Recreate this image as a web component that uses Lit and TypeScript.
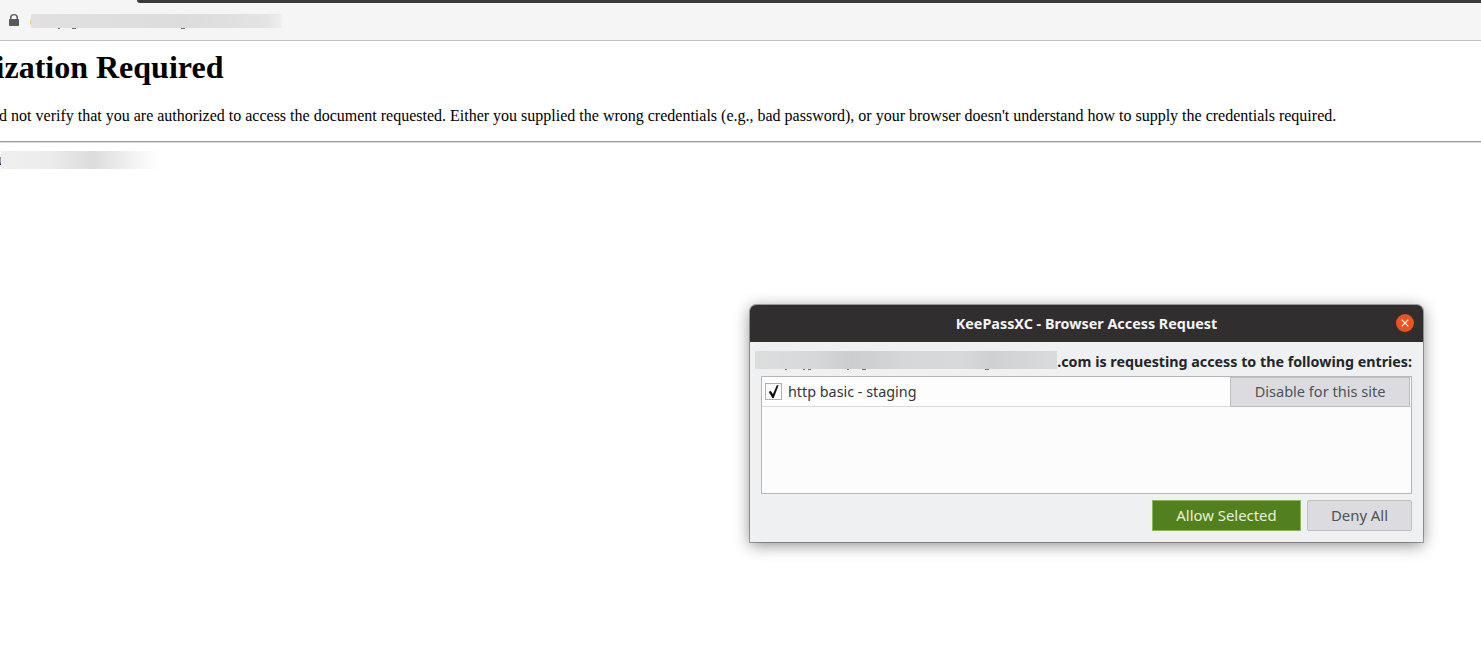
import { LitElement, html, css } from "lit";
import { customElement } from "lit/decorators.js";

@customElement("app-root")
export class AppRoot extends LitElement {
  static styles = css`
    :host {
      display: block;
      position: relative;
      width: 1481px;
      height: 653px;
      overflow: hidden;
      background: #fff;
      font-family: "Liberation Serif", serif;
      color: #000;
    }
    .toolbar {
      position: relative;
      box-sizing: border-box;
      height: 41px;
      background: #f5f5f5;
      border-bottom: 1px solid #c0c0c0;
      display: flex;
      align-items: center;
      padding-left: 9px;
    }
    .strip {
      position: absolute;
      left: 137px;
      right: 0;
      top: 0;
      height: 3px;
      background: #3c3b37;
      border-bottom-left-radius: 4px;
    }
    .lock { display: block; width: 10px; height: 12px; }
    .dot {
      position: absolute;
      left: 30px;
      top: 19px;
      width: 4px;
      height: 6px;
      border-radius: 3px;
      background: #f6c46a;
    }
    .url-blur {
      position: absolute;
      left: 31px;
      top: 14px;
      width: 251px;
      height: 14px;
      background: linear-gradient(90deg, #e2e0e0 0%, #dfdfdf 30%, #dcdcdc 60%, #e0e0e0 80%, #e4e4e4 94%, #efefef 100%);
    }
    .tail {
      position: absolute;
      top: 28px;
      height: 1px;
      background: #33415c;
      opacity: 0.75;
    }
    .doc { overflow: hidden; }
    h1 {
      margin: 8px 0 21.44px -104px;
      font-size: 32px;
      line-height: 37px;
      font-weight: 700;
      white-space: nowrap;
    }
    p {
      margin: 0 0 16px -104px;
      font-size: 16px;
      line-height: 18px;
      white-space: nowrap;
    }
    hr {
      margin: 0;
      height: 0;
      border: 0;
      border-top: 1px solid #a0a0a0;
      border-bottom: 1px solid #d8d8d8;
    }
    .addr-blur {
      position: absolute;
      left: 1px;
      top: 151px;
      width: 162px;
      height: 18px;
      background: linear-gradient(90deg, #efefef 0%, #ececec 30%, #dcdcdc 56%, #e8e8e8 70%, #f1f1f1 80%, #fbfbfb 92%, #fff 100%);
    }
    .addr-sliver {
      position: absolute;
      left: 0;
      top: 157px;
      width: 1px;
      height: 8px;
      background: linear-gradient(180deg, #c4744a 0%, #8fb4d8 55%, #222 100%);
    }
    .window {
      position: absolute;
      left: 750px;
      top: 305px;
      width: 673px;
      height: 237px;
      box-sizing: border-box;
      display: flex;
      flex-direction: column;
      background: #eff0f1;
      border-radius: 6px 6px 0 0;
      outline: 1px solid rgba(0, 0, 0, 0.3);
      box-shadow: 0 3px 16px rgba(0, 0, 0, 0.46);
      font-family: "Noto Sans", sans-serif;
      font-size: 14px;
      color: #31363b;
    }
    .titlebar {
      position: relative;
      flex: none;
      height: 37px;
      background: #302e2f;
      border-radius: 6px 6px 0 0;
      display: flex;
      align-items: center;
      justify-content: center;
      color: #f4f4f4;
      font-weight: 700;
      font-size: 14.35px;
    }
    .close {
      position: absolute;
      right: 9px;
      top: 9px;
      width: 18px;
      height: 18px;
      display: block;
    }
    .body {
      flex: 1;
      display: flex;
      flex-direction: column;
      padding: 11px 11px 12px 11px;
    }
    .request {
      position: relative;
      height: 18px;
      line-height: 18px;
      text-align: right;
      font-weight: 700;
      font-size: 14.27px;
      color: #232629;
      margin-bottom: 5px;
      white-space: nowrap;
    }
    .host-blur {
      position: absolute;
      left: -6px;
      top: -2px;
      width: 302px;
      height: 18px;
      background: linear-gradient(90deg, #dcdddd 0%, #d8d9da 18%, #cccdce 32%, #d6d7d8 50%, #d8d9da 68%, #cfd0d1 78%, #dadbdc 100%);
    }
    .host-tail {
      position: absolute;
      top: 16px;
      height: 1px;
      background: #33363c;
      opacity: 0.7;
    }
    .list {
      box-sizing: border-box;
      height: 118px;
      background: #fcfcfc;
      border: 1px solid #b6b6b6;
    }
    .row {
      box-sizing: border-box;
      height: 30px;
      display: flex;
      align-items: center;
      border-bottom: 1px solid #dadada;
      background: #fdfdfd;
    }
    .check {
      margin-left: 3px;
      width: 17px;
      height: 17px;
      display: block;
      flex: none;
    }
    .row-label { margin-left: 6px; flex: 1; font-size: 14.35px; }
    .disable {
      box-sizing: border-box;
      width: 180px;
      height: 30px;
      padding-bottom: 2px;
      margin-right: 1px;
      background: #dcdce0;
      border: 1px solid #bcbec0;
      color: #4d5257;
      display: flex;
      align-items: center;
      justify-content: center;
      font-size: 14.55px;
    }
    .actions {
      display: flex;
      justify-content: flex-end;
      gap: 6px;
      margin-top: 6px;
    }
    .btn {
      box-sizing: border-box;
      height: 31px;
      padding-bottom: 2px;
      display: flex;
      align-items: center;
      justify-content: center;
      font-size: 14.9px;
    }
    .allow {
      width: 149px;
      background: #53801f;
      border: 1px solid #8cb45c;
      color: #e6efd9;
    }
    .deny {
      width: 105px;
      background: #dcdce0;
      border: 1px solid #bfc0c3;
      border-radius: 2px;
      color: #4d5257;
    }
  `;

  render() {
    return html`
      <div class="toolbar">
        <div class="strip"></div>
        <svg class="lock" viewBox="0 0 10 12">
          <path fill="#5a5a5e" d="M1 5V3.600a4 3.600 0 0 1 8 0V5h.3c.4 0 .7.3.7.7v5.600c0 .4-.3.7-.7.7H.7c-.4 0-.7-.3-.7-.7V5.700c0-.4.3-.7.7-.7zm1.500 0h5V3.600a2.500 2.300 0 0 0-5 0z"/>
        </svg>
        <div class="dot"></div>
        <div class="tail" style="left:58px;width:2px"></div>
        <div class="tail" style="left:72px;width:4px"></div>
        <div class="tail" style="left:181px;width:4px"></div>
        <div class="url-blur"></div>
      </div>
      <div class="doc">
        <h1>Authorization Required</h1>
        <p>This server could not verify that you are authorized to access the document requested. Either you supplied the wrong credentials (e.g., bad password), or your browser doesn't understand how to supply the credentials required.</p>
        <hr />
      </div>
      <div class="addr-sliver"></div>
      <div class="addr-blur"></div>

      <div class="window">
        <div class="titlebar">
          KeePassXC - Browser Access Request
          <svg class="close" viewBox="0 0 18 18">
            <circle cx="9" cy="9" r="9" fill="#e95420"/>
            <path d="M5.700 5.700l6.600 6.600M12.300 5.700l-6.600 6.600" stroke="#fff" stroke-width="1.200" fill="none"/>
          </svg>
        </div>
        <div class="body">
          <div class="request">
            <span class="host-tail" style="left:24px;width:2px"></span>
            <span class="host-tail" style="left:42px;width:2px"></span>
            <span class="host-tail" style="left:47px;width:3px"></span>
            <span class="host-tail" style="left:86px;width:2px"></span>
            <span class="host-tail" style="left:101px;width:4px"></span>
            <span class="host-tail" style="left:224px;width:4px"></span>
            <span class="host-blur"></span>.com is requesting access to the following entries:
          </div>
          <div class="list">
            <div class="row">
              <svg class="check" viewBox="0 0 17 17">
                <rect x="0.500" y="0.500" width="16" height="16" fill="#fcfcfc" stroke="#b0b0b0"/>
                <path d="M3.800 9L5.600 7.800 8 11 11.800 2.200H13.600L8.800 15H7.300Z" fill="#111"/>
              </svg>
              <span class="row-label">http basic - staging</span>
              <div class="disable">Disable for this site</div>
            </div>
          </div>
          <div class="actions">
            <div class="btn allow">Allow Selected</div>
            <div class="btn deny">Deny All</div>
          </div>
        </div>
      </div>
    `;
  }
}
